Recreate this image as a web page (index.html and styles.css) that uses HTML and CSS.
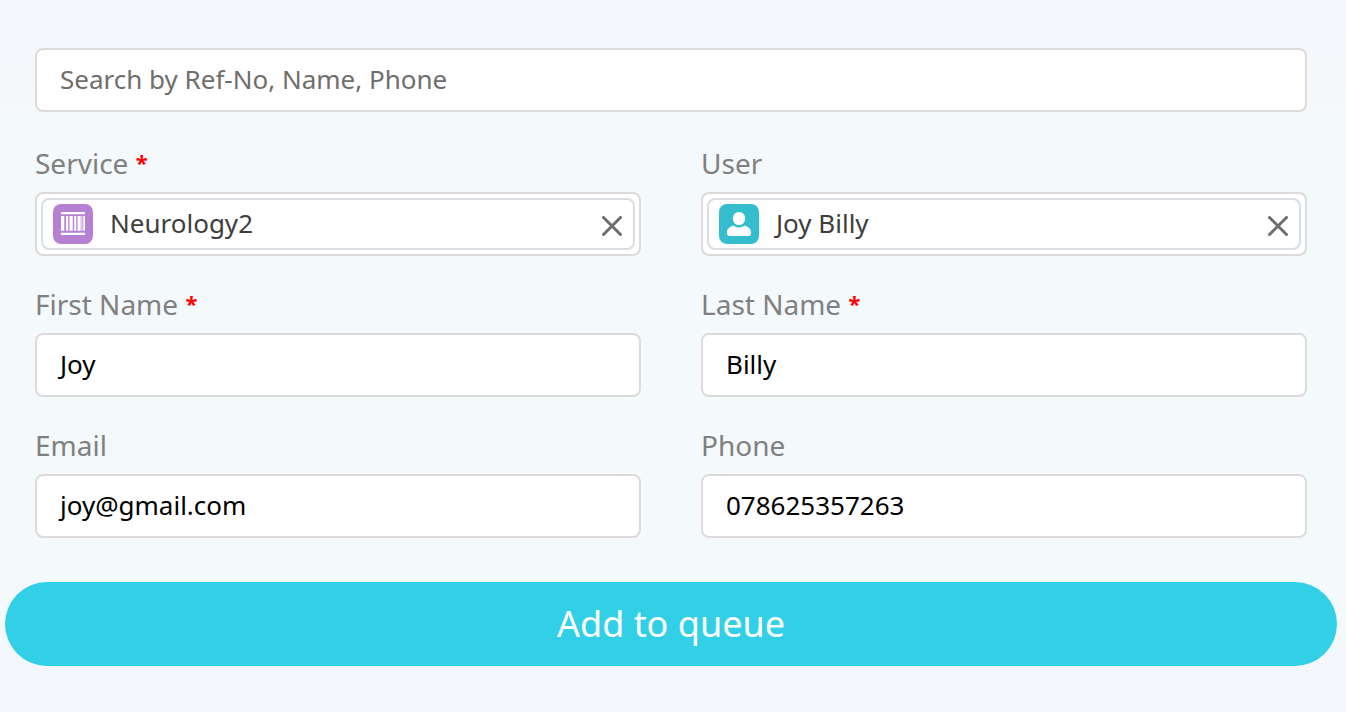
FILE: index.html
```
<!DOCTYPE html>
<html lang="en">
<head>
  <meta charset="UTF-8" />
  <meta name="viewport" content="width=device-width, initial-scale=1.0" />
  <title>Add to queue</title>
  <link rel="stylesheet" href="styles.css">
</head>
<body>
  <form class="queue-form">
    <div class="fields">
      <input class="control search" type="search" aria-label="Search" placeholder="Search by Ref-No, Name, Phone" />

      <div class="field">
        <label for="service">Service <span class="required">*</span></label>
        <div class="control lookup">
          <div class="pill">
            <svg class="pill-icon service-icon" viewBox="0 0 40 40" aria-hidden="true">
              <path fill="#fff" d="M8 8h24v2.200H8zM8 28.800h24V31H8zM8 12h3.300v14.800H8zM13 12h2.200v14.800H13zM16.500 12h3.300v14.800h-3.300zM21.200 12h2v14.800h-2zM24.500 12h3.200v14.800h-3.200zM28.400 12h1v14.800h-1zM30.300 12H32v14.800h-1.700z" />
            </svg>
            <input class="pill-text" type="text" id="service" name="service" value="Neurology2" readonly />
            <button class="remove" type="button" aria-label="Remove service">
              <svg viewBox="0 0 20 20"><path d="M1.5 1.5l17 17M18.5 1.5l-17 17" /></svg>
            </button>
          </div>
        </div>
      </div>

      <div class="field">
        <label for="user">User</label>
        <div class="control lookup">
          <div class="pill">
            <svg class="pill-icon user-icon" viewBox="0 0 40 40" aria-hidden="true">
              <ellipse cx="20" cy="14.5" rx="6.2" ry="6.6" fill="#fff" />
              <path fill="#fff" d="M14.2 21.6c1.600 1.300 3.600 2 5.800 2s4.200-.7 5.800-2c3.400 1.300 6.200 3.400 6.200 6.400v1.500c0 1.400-1 2.400-2.400 2.400H10.400C9 31.900 8 30.900 8 29.500V28c0-3 2.800-5.100 6.200-6.400z" />
            </svg>
            <input class="pill-text" type="text" id="user" name="user" value="Joy Billy" readonly />
            <button class="remove" type="button" aria-label="Remove user">
              <svg viewBox="0 0 20 20"><path d="M1.5 1.5l17 17M18.5 1.5l-17 17" /></svg>
            </button>
          </div>
        </div>
      </div>

      <div class="field">
        <label for="first-name">First Name <span class="required">*</span></label>
        <input class="control" type="text" id="first-name" name="first-name" value="Joy" required />
      </div>

      <div class="field">
        <label for="last-name">Last Name <span class="required">*</span></label>
        <input class="control" type="text" id="last-name" name="last-name" value="Billy" required />
      </div>

      <div class="field">
        <label for="email">Email</label>
        <input class="control" type="email" id="email" name="email" value="joy@gmail.com" />
      </div>

      <div class="field">
        <label for="phone">Phone</label>
        <input class="control" type="tel" id="phone" name="phone" value="078625357263" />
      </div>
    </div>

    <button class="submit" type="submit">Add to queue</button>
  </form>
</body>
</html>
```
FILE: styles.css
```
* {
  box-sizing: border-box;
}

body {
  margin: 0;
  min-height: 100vh;
  background: linear-gradient(#f4f7fb, #f4f9fc 20%, #f4f9fc 85%, #f3f6fb);
  font-family: "Noto Sans", "Open Sans", sans-serif;
}

input,
button {
  font-family: inherit;
}

.queue-form {
  padding: 48px 9px 46px 5px;
}

.fields {
  display: grid;
  grid-template-columns: 1fr 1fr;
  gap: 30px 60px;
  padding: 0 30px;
}

.search {
  grid-column: 1 / -1;
  margin-bottom: 3px;
}

label {
  display: block;
  height: 47px;
  line-height: 36px;
  font-size: 28px;
  color: #808080;
}

.required {
  color: #ff0000;
  font-size: 22px;
  font-weight: bold;
  vertical-align: 3px;
  line-height: 1;
}

.control {
  display: block;
  width: 100%;
  height: 64px;
  padding: 0 19px 2px;
  border: 2px solid #dddbda;
  border-radius: 8px;
  background-color: #fff;
  font-size: 26px;
  text-indent: 4px;
  color: #000;
}

.control::placeholder {
  color: #706e6b;
}

.lookup {
  padding: 4px;
}

.pill {
  display: flex;
  align-items: center;
  height: 52px;
  padding: 0 11px 0 10px;
  border: 2px solid #d8dde6;
  border-radius: 8px;
}

.pill-icon {
  width: 40px;
  height: 40px;
  border-radius: 8px;
}

.service-icon {
  background-color: #b781d3;
}

.user-icon {
  background-color: #34becd;
}

.pill-text {
  flex: 1;
  min-width: 0;
  padding: 0 13px 2px;
  border: none;
  background: none;
  font-size: 26px;
  text-indent: 4px;
  color: #3e3e3c;
}

.remove {
  display: flex;
  padding: 4px 0 0;
  border: none;
  background: none;
  cursor: pointer;
}

.remove svg {
  width: 20px;
  height: 20px;
  fill: none;
  stroke: #706e6b;
  stroke-width: 3;
  stroke-linecap: round;
}

.submit {
  display: block;
  width: 100%;
  height: 84px;
  margin-top: 44px;
  padding: 0 0 2px;
  border: none;
  border-radius: 42px;
  background-color: #32d0e7;
  font-size: 36px;
  color: #fff;
  cursor: pointer;
}
```
